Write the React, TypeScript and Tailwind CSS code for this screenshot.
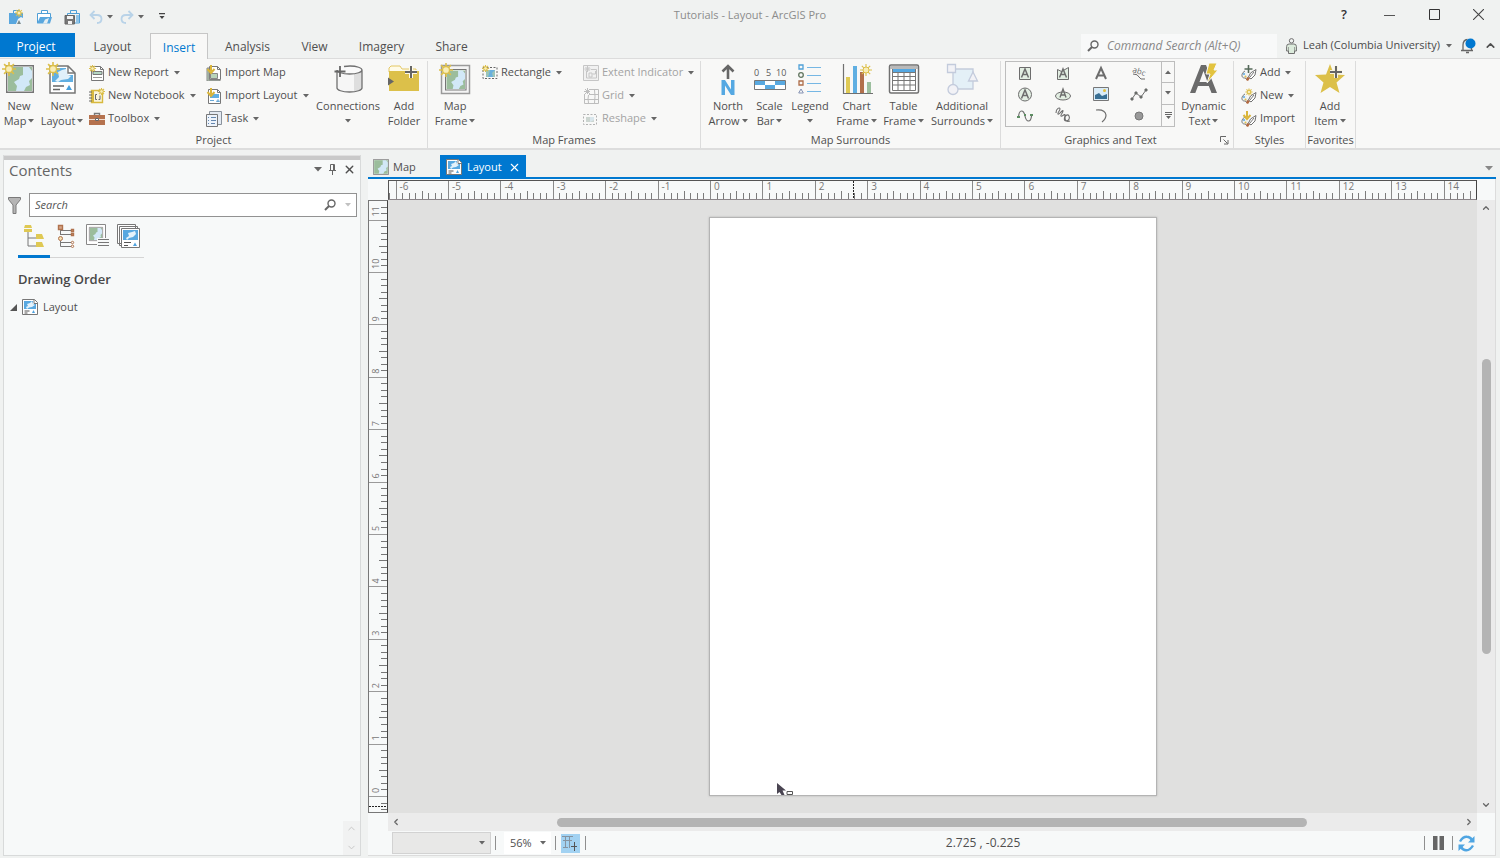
import { ReactNode, SVGProps } from "react"
import { ChevronDown, ChevronLeft, ChevronRight, ChevronUp, X } from "lucide-react"

type IconProps = SVGProps<SVGSVGElement>

const LABEL_FONT = "'Open Sans', sans-serif"

export default function App() {
  return (
    <div className="flex h-screen min-h-[600px] flex-col overflow-hidden bg-[#f0f2f1] font-['Open_Sans','Noto_Sans',sans-serif] text-[11px] text-[#4f4f4f]">
      <TitleBar />
      <TabBar />
      <Ribbon />
      <div className="flex min-h-0 flex-1 gap-[7px] pt-[5px] pr-1 pb-[2px] pl-[3px]">
        <ContentsPane />
        <LayoutView />
      </div>
    </div>
  )
}

/* ---------- title bar and tabs ---------- */

function TitleBar() {
  return (
    <header className="grid h-[33px] shrink-0 grid-cols-[1fr_auto_1fr] items-center">
      <div className="flex items-center pl-2">
        <button aria-label="New project" className="w-7"><NewProjectIcon /></button>
        <button aria-label="Open project" className="w-7"><OpenProjectIcon /></button>
        <button aria-label="Save project" className="w-[25px]"><SaveProjectIcon /></button>
        <button aria-label="Undo" className="flex w-[31px] items-center gap-1">
          <UndoIcon />
          <Caret />
        </button>
        <button aria-label="Redo" className="flex w-[39px] items-center gap-1">
          <UndoIcon className="-scale-x-100" />
          <Caret />
        </button>
        <button aria-label="Customize toolbar">
          <svg width="6" height="7" viewBox="0 0 7 8" fill="#444">
            <path d="M0 0h7v1.4H0zM0.5 3.5h6L3.5 7z" />
          </svg>
        </button>
      </div>
      <h1 className="pb-[3px] text-[#8c8c8c]">Tutorials - Layout - ArcGIS Pro</h1>
      <div className="flex items-center justify-end pb-[5px] text-[#333333]">
        <button aria-label="Help" className="w-[46px] text-center text-[13px] leading-4 font-semibold">?</button>
        <button aria-label="Minimize" className="flex w-[45px] justify-center">
          <svg width="11" height="11" viewBox="0 0 11 11"><path d="M0 6.5h11" stroke="#555" /></svg>
        </button>
        <button aria-label="Maximize" className="flex w-[45px] justify-center">
          <svg width="11" height="11" viewBox="0 0 11 11"><path d="M.5.5h10v10H.5z" fill="none" stroke="#333" /></svg>
        </button>
        <button aria-label="Close" className="flex w-[43px] justify-center">
          <svg width="11" height="11" viewBox="0 0 11 11"><path d="M0 0l11 11M11 0L0 11" stroke="#444" strokeWidth="1.1" /></svg>
        </button>
      </div>
    </header>
  )
}

function TabBar() {
  return (
    <nav className="flex h-[26px] shrink-0 border-b border-[#dcdcdc] text-xs">
      <button className="h-6 w-[75px] bg-[#0078d0] pt-[3px] pr-[3px] text-white">Project</button>
      <button className="w-[75px] pt-[3px]">Layout</button>
      <button className="-mb-px w-[58px] border border-b-0 border-[#c6c6c6] bg-[#f8f8f7] pt-[2px] text-[#0078d0]">Insert</button>
      <button className="w-[79px] pt-[3px]">Analysis</button>
      <button className="w-[55px] pt-[3px]">View</button>
      <button className="w-[79px] pt-[3px]">Imagery</button>
      <button className="w-[61px] pt-[3px]">Share</button>
      <div className="ml-auto flex items-center pr-[3px]">
        <label className="mr-[9px] flex h-6 w-[196px] items-center gap-2 bg-[#f8f9f9] pl-[6px]">
          <SearchIcon />
          <input
            aria-label="Command search"
            placeholder="Command Search (Alt+Q)"
            className="w-full bg-transparent italic outline-none placeholder:text-[#888888]"
          />
        </label>
        <button className="flex items-center gap-[6px] text-[11px] text-[#4a4a4a]">
          <UserIcon />
          <span>Leah (Columbia University)</span>
          <Caret />
        </button>
        <button aria-label="Notifications" className="ml-2"><BellIcon /></button>
        <button aria-label="Collapse ribbon" className="ml-[7px]"><ChevronUp size={13} strokeWidth={3} /></button>
      </div>
    </nav>
  )
}

/* ---------- ribbon ---------- */

function Ribbon() {
  return (
    <section className="flex h-[91px] shrink-0 border-b-2 border-[#dddddd] bg-[#f8f8f7] pt-[2px]">
      <Group label="Project" className="w-[428px]">
        <BigButton icon={<NewMapIcon />} lines={["New", "Map"]} className="w-[38px]" />
        <BigButton icon={<NewLayoutIcon />} lines={["New", "Layout"]} className="w-12" />
        <div className="flex w-[117px] flex-col pl-[3px]">
          <SmallButton icon={<NewReportIcon />} label="New Report" menu />
          <SmallButton icon={<NotebookIcon />} label="New Notebook" menu />
          <SmallButton icon={<ToolboxIcon />} label="Toolbox" menu />
        </div>
        <div className="flex w-[109px] flex-col pl-[3px]">
          <SmallButton icon={<ImportMapIcon />} label="Import Map" />
          <SmallButton icon={<ImportLayoutIcon />} label="Import Layout" menu />
          <SmallButton icon={<TaskIcon />} label="Task" menu />
        </div>
        <BigButton icon={<ConnectionsIcon />} lines={["Connections", ""]} className="w-[72px]" />
        <BigButton icon={<AddFolderIcon />} lines={["Add", "Folder"]} menu={false} className="w-10" />
      </Group>
      <Group label="Map Frames" className="w-[273px]">
        <BigButton icon={<MapFrameIcon />} lines={["Map", "Frame"]} className="w-[54px]" />
        <div className="flex w-[101px] flex-col">
          <SmallButton icon={<RectangleIcon />} label="Rectangle" menu />
        </div>
        <div className="flex flex-col text-[#a3a3a3]">
          <SmallButton icon={<ExtentIcon />} label="Extent Indicator" menu disabled />
          <SmallButton icon={<GridIcon />} label="Grid" menu disabled />
          <SmallButton icon={<ReshapeIcon />} label="Reshape" menu disabled />
        </div>
      </Group>
      <Group label="Map Surrounds" className="w-[300px]">
        <BigButton icon={<NorthArrowIcon />} lines={["North", "Arrow"]} className="w-[54px]" />
        <BigButton icon={<ScaleBarIcon />} lines={["Scale", "Bar"]} className="w-[29px]" />
        <BigButton icon={<LegendIcon />} lines={["Legend", ""]} className="w-[52px]" />
        <BigButton icon={<ChartFrameIcon />} lines={["Chart", "Frame"]} className="w-[41px]" />
        <BigButton icon={<TableFrameIcon />} lines={["Table", "Frame"]} className="w-[53px]" />
        <BigButton icon={<AdditionalIcon />} lines={["Additional", "Surrounds"]} className="w-16" />
      </Group>
      <Group label="Graphics and Text" className="w-[233px]" launcher>
        <div className="ml-1 flex h-[66px] w-[170px] border border-[#bdbdbd]">
          <div className="grid flex-1 grid-cols-4 grid-rows-3 place-items-center pr-[3px]">
            {GALLERY.map(([name, shape]) => (
              <button key={name} aria-label={name}>
                <svg width="18" height="18" viewBox="0 0 18 18" fill="none" stroke="#6d6d6d">{shape}</svg>
              </button>
            ))}
          </div>
          <div className="grid w-[13px] grid-rows-3 divide-y divide-[#bdbdbd] border-l border-[#bdbdbd]">
            <button aria-label="Previous row" className="flex items-center justify-center"><Caret className="rotate-180" /></button>
            <button aria-label="Next row" className="flex items-center justify-center"><Caret /></button>
            <button aria-label="More" className="flex items-center justify-center">
              <svg width="7" height="7" viewBox="0 0 7 7" fill="#666"><path d="M0 0h7v1H0zM0 2h7v1H0zM1 4h5L3.5 7z" /></svg>
            </button>
          </div>
        </div>
        <BigButton icon={<DynamicTextIcon />} lines={["Dynamic", "Text"]} className="w-[57px]" />
      </Group>
      <Group label="Styles" className="w-[72px]">
        <div className="flex flex-col pl-[7px]">
          <SmallButton icon={<StyleIcon kind="add" />} label="Add" menu />
          <SmallButton icon={<StyleIcon kind="new" />} label="New" menu />
          <SmallButton icon={<StyleIcon kind="import" />} label="Import" />
        </div>
      </Group>
      <Group label="Favorites" className="w-[50px]">
        <BigButton icon={<StarIcon />} lines={["Add", "Item"]} className="w-12" />
      </Group>
    </section>
  )
}

type GroupProps = { label: string; className: string; launcher?: boolean; children: ReactNode }

function Group({ label, className, launcher, children }: GroupProps) {
  return (
    <div className={`flex h-[87px] shrink-0 flex-col border-r border-[#dcdcdc] ${className}`}>
      <div className="flex h-[71px] whitespace-nowrap">{children}</div>
      <div className="flex h-4 items-center leading-4 whitespace-nowrap">
        <span className="flex-1 text-center">{label}</span>
        {launcher && (
          <button aria-label={`${label} options`} className="pr-1">
            <svg width="9" height="9" viewBox="0 0 9 9" fill="none" stroke="#666">
              <path d="M.5 6V.5H6M3.5 3.5l4 4M8 4v4H4" />
            </svg>
          </button>
        )}
      </div>
    </div>
  )
}

type BigButtonProps = { icon: ReactNode; lines: [string, string]; menu?: boolean; className: string }

function BigButton({ icon, lines, menu = true, className }: BigButtonProps) {
  return (
    <button className={`flex shrink-0 flex-col items-center leading-[15px] ${className}`}>
      <span className="h-[37px] pt-[2px]">{icon}</span>
      <span>{lines[0]}</span>
      <span className="flex h-[15px] items-center gap-[2px]">
        {lines[1]}
        {menu && <Caret />}
      </span>
    </button>
  )
}

type SmallButtonProps = { icon: ReactNode; label: string; menu?: boolean; disabled?: boolean }

function SmallButton({ icon, label, menu, disabled }: SmallButtonProps) {
  return (
    <button disabled={disabled} className="flex h-[23px] items-center gap-[3px]">
      {icon}
      <span>{label}</span>
      {menu && <Caret className="ml-[2px]" />}
    </button>
  )
}

/* ---------- contents pane ---------- */

function ContentsPane() {
  return (
    <aside className="flex w-[358px] shrink-0 flex-col border border-t-0 border-[#d8dada] bg-[#f7f9f9]">
      <div className="h-[5px] border-t border-[#e0e0e0] bg-[#c9c9c9]" />
      <div className="flex h-[19px] items-center gap-[6px] pr-1 pl-[5px]">
        <h2 className="mr-auto text-[15px] leading-5 text-[#666666]">Contents</h2>
        <button aria-label="Pane menu"><svg width="8" height="5" viewBox="0 0 8 5"><path d="M0 0h8L4 4.5z" fill="#666" /></svg></button>
        <button aria-label="Auto hide">
          <svg width="9" height="11" viewBox="0 0 9 11" fill="none" stroke="#666"><path d="M2.5 6V.5h4V6M1 6.5h7M4.500 7v4M5.500 1v5" /></svg>
        </button>
        <button aria-label="Close pane"><X size={13} strokeWidth={2.500} /></button>
      </div>
      <div className="mt-[14px] flex items-center gap-2 pr-[3px] pl-1">
        <svg width="13" height="17" viewBox="0 0 13 17" fill="#b5b5b5" stroke="#7a7a7a"><path d="M.5.5h12v2L8 8v8.500H5V8L.5 2.500z" /></svg>
        <label className="flex h-6 flex-1 items-center border border-[#929292] bg-white px-[5px]">
          <input aria-label="Search contents" placeholder="Search" className="min-w-0 flex-1 italic outline-none placeholder:text-[#555555]" />
          <SearchIcon />
          <Caret className="ml-[9px] opacity-40" />
        </label>
      </div>
      <div className="mt-[7px] ml-[14px] flex w-[126px] border-b border-[#d5d5d5]">
        <button aria-label="List by drawing order" className="-mb-px flex h-[34px] w-8 justify-center border-b-[3px] border-[#0078d0]"><DrawingOrderIcon /></button>
        <button aria-label="List by element type" className="flex w-8 justify-center"><ElementTypeIcon /></button>
        <button aria-label="List map frames" className="flex w-8 justify-center"><MapFramesIcon /></button>
        <button aria-label="List pages" className="flex w-7 justify-center"><PagesIcon /></button>
      </div>
      <h3 className="mt-[11px] ml-[14px] text-[13px] leading-5 font-semibold text-[#484848]">Drawing Order</h3>
      <ul className="mt-2 flex-1 pl-[6px]">
        <li className="flex h-5 items-center gap-[5px]">
          <svg width="7" height="7" viewBox="0 0 7 7"><path d="M7 0v7H0z" fill="#555" /></svg>
          <PageIcon />
          <span>Layout</span>
        </li>
      </ul>
      <div className="flex h-[34px] w-[17px] flex-col items-center justify-between self-end bg-[#f1f2f2] py-[2px] text-[#c4c4c4]">
        <ChevronUp size={11} />
        <ChevronDown size={11} />
      </div>
    </aside>
  )
}

/* ---------- layout view ---------- */

function LayoutView() {
  return (
    <main className="flex min-w-0 flex-1 flex-col">
      <div className="flex h-6 shrink-0 items-end border-b-2 border-[#0078d0]">
        <button className="flex h-[22px] w-[72px] items-center gap-1 pt-[2px] pl-[5px]">
          <SmallMapIcon />
          <span>Map</span>
        </button>
        <button className="flex h-[22px] w-[86px] items-center gap-[5px] bg-[#0078d0] pt-[2px] pl-[6px] text-white">
          <PageIcon />
          <span>Layout</span>
          <X size={13} strokeWidth={2} className="ml-px" />
        </button>
        <button aria-label="View list" className="ml-auto self-center pt-1 pr-[3px]">
          <svg width="8" height="5" viewBox="0 0 8 5"><path d="M0 0h8L4 4.500z" fill="#888" /></svg>
        </button>
      </div>
      <div className="grid min-h-0 flex-1 grid-cols-[20px_minmax(0,1fr)_18px] grid-rows-[20px_minmax(0,1fr)_18px] border-r border-[#dcdcdc] bg-[#f7f9f9] pt-px">
        <div />
        <HorizontalRuler />
        <div />
        <VerticalRuler />
        <div className="flex min-h-0 items-center justify-center overflow-hidden bg-[#e0e0df]">
          <div className="relative h-[579px] w-[448px] shrink-0 border border-[#b4b4b4] bg-white shadow-[0_0_2px_#b4b4b4]">
            <Cursor className="absolute top-[565px] left-[66px]" />
          </div>
        </div>
        <div className="flex flex-col items-center bg-[#ebebeb] text-[#666666]">
          <button aria-label="Scroll up" className="flex h-4 items-center"><ChevronUp size={10} strokeWidth={3} /></button>
          <div className="flex-[143]" />
          <div className="w-[9px] flex-[296] rounded-full bg-[#b4b4b4]" />
          <div className="flex-[143]" />
          <button aria-label="Scroll down" className="flex h-4 items-center"><ChevronDown size={10} strokeWidth={3} /></button>
        </div>
        <div />
        <div className="flex items-center bg-[#ebebeb] text-[#666666]">
          <button aria-label="Scroll left" className="flex w-4 justify-center"><ChevronLeft size={10} strokeWidth={3} /></button>
          <div className="flex-[153]" />
          <div className="h-[9px] flex-[751] rounded-full bg-[#b4b4b4]" />
          <div className="flex-[154]" />
          <button aria-label="Scroll right" className="flex w-4 justify-center"><ChevronRight size={10} strokeWidth={3} /></button>
        </div>
        <div />
      </div>
      <StatusBar />
    </main>
  )
}

function StatusBar() {
  return (
    <footer className="grid h-[25px] shrink-0 grid-cols-[7fr_auto_6fr] items-center border-r border-b border-[#dcdcdc] bg-[#f7f9f9] pl-6">
      <div className="flex items-center">
        <div className="relative">
          <select aria-label="Map frame" className="block h-[22px] w-[99px] appearance-none border border-[#d2d2d2] bg-[#e8e8e7]" />
          <Caret className="pointer-events-none absolute top-[9px] right-[6px]" />
        </div>
        <Divider className="ml-1" />
        <div className="relative ml-2">
          <select aria-label="Scale" className="block h-[22px] w-[47px] appearance-none bg-white pl-[6px]">
            <option>56%</option>
          </select>
          <Caret className="pointer-events-none absolute top-[9px] right-[5px]" />
        </div>
        <Divider className="ml-1" />
        <button aria-label="Snapping" className="ml-[5px] bg-[#a2d2f2]">
          <svg width="19" height="19" viewBox="0 0 19 19" fill="none" stroke="#8593a0">
            <path d="M1 2.500h11M2 6.500h9M4.500 2v12M8.500 2v12M2 13.500h5" />
            <path d="M13.500 8v9M10 12.500h6" stroke="#555" />
          </svg>
        </button>
        <Divider className="ml-[5px]" />
      </div>
      <span className="text-xs">2.725 , -0.225</span>
      <div className="flex items-center justify-end pr-5">
        <Divider />
        <button aria-label="Pause drawing" className="mx-2">
          <svg width="11" height="14" viewBox="0 0 11 14" fill="#666"><path d="M0 0h4.500v14H0zM6.500 0H11v14H6.500z" /></svg>
        </button>
        <Divider />
        <button aria-label="Refresh" className="ml-[5px]"><RefreshIcon /></button>
      </div>
    </footer>
  )
}

function Divider({ className = "" }: { className?: string }) {
  return <div className={`h-[14px] w-px bg-[#8f8f8f] ${className}`} />
}

/* ---------- rulers ---------- */

const INCH = 52.4
const EIGHTHS = Array.from({ length: 170 }, (_, i) => i - 50)

function inches(from: number, to: number) {
  return Array.from({ length: to - from + 1 }, (_, i) => from + i)
}

function HorizontalRuler() {
  // origin of the page, measured from the ruler's left end
  const origin = 322
  return (
    <svg className="h-5 w-full overflow-hidden border border-t-[#555555] border-r-[#444444] border-b-[#8b8589] border-l-[#555555]" fill="none">
      {EIGHTHS.map((n) => {
        const x = Math.round(origin + (n * INCH) / 8) - 0.5
        const top = n % 8 === 0 ? 0 : n % 4 === 0 ? 10 : 12
        return <path key={n} d={`M${x} ${top}V18`} stroke={n % 8 === 0 ? "#8a8a8a" : "#7c7c7c"} />
      })}
      {inches(-6, 14).map((n) => (
        <text key={n} x={origin + 3 + n * INCH} y="9" fontSize="10" fill="#777" fontFamily={LABEL_FONT}>
          {n}
        </text>
      ))}
      <path d="M464.5 0V18" stroke="#222" strokeDasharray="2 1" />
    </svg>
  )
}

function VerticalRuler() {
  const origin = 596
  return (
    <svg className="h-full w-5 overflow-hidden border border-[#777777] border-r-[#444444]" fill="none">
      {EIGHTHS.map((n) => {
        const y = Math.round(origin - (n * INCH) / 8) - 0.5
        const left = n % 8 === 0 ? 0 : n % 4 === 0 ? 10 : 12
        return <path key={n} d={`M${left} ${y}H18`} stroke={n % 8 === 0 ? "#9a9a9a" : "#777"} />
      })}
      {inches(0, 11).map((n) => {
        const y = origin - 4 - n * INCH
        return (
          <text key={n} x="10" y={y} transform={`rotate(-90 10 ${y})`} fontSize="9" fill="#777" fontFamily={LABEL_FONT}>
            {n}
          </text>
        )
      })}
      <path d="M0 605.5H18" stroke="#222" strokeDasharray="2 1" />
    </svg>
  )
}

/* ---------- shared pieces of icons ---------- */

function Caret({ className = "" }: { className?: string }) {
  return (
    <svg width="6" height="4" viewBox="0 0 6 4" className={`shrink-0 ${className}`}>
      <path d="M0 0h6L3 3.500z" fill="#666" />
    </svg>
  )
}

function Sun({ x, y, r = 3.5 }: { x: number; y: number; r?: number }) {
  const rays = `M0 ${-2 * r}V${2 * r}M${-2 * r} 0H${2 * r}M${-1.4 * r} ${-1.4 * r}L${1.4 * r} ${1.4 * r}M${1.4 * r} ${-1.4 * r}L${-1.4 * r} ${1.4 * r}`
  return (
    <g transform={`translate(${x} ${y})`} stroke="#dcbf4b">
      <path d={rays} strokeWidth={r > 3 ? 1.6 : 1.1} />
      <circle r={r} fill="#f8edb8" strokeWidth={r > 3 ? 1.3 : 1} />
    </g>
  )
}

function Icon16({ children, ...props }: IconProps) {
  return <svg width="16" height="16" viewBox="0 0 16 16" fill="none" className="shrink-0" {...props}>{children}</svg>
}

function Icon32({ children, ...props }: IconProps) {
  return <svg width="32" height="32" viewBox="0 0 32 32" fill="none" overflow="visible" {...props}>{children}</svg>
}

function SearchIcon() {
  return (
    <svg width="12" height="12" viewBox="0 0 12 12" fill="none" stroke="#666" className="shrink-0">
      <circle cx="7.500" cy="4.500" r="3.500" strokeWidth="1.400" />
      <path d="M5 7L1 11" strokeWidth="2" />
    </svg>
  )
}

function UserIcon() {
  return (
    <svg width="11" height="16" viewBox="0 0 11 16" fill="none" stroke="#707070">
      <circle cx="5.500" cy="2.800" r="2.200" />
      <path d="M.6 13V8.500q0-2.500 2.500-2.500h4.800q2.500 0 2.500 2.500V13H8.500v2.500h-6V13z" fill="#dcebdc" />
      <path d="M2.500 9v4M8.500 9v4" strokeWidth=".6" />
    </svg>
  )
}

function BellIcon() {
  return (
    <svg width="17" height="16" viewBox="0 0 17 16" fill="none">
      <path d="M1 12.500h12M3 12V7q0-5 4.500-5.500M11.500 12V9M6 14.500h3" stroke="#666" strokeWidth="1.300" />
      <circle cx="10.500" cy="5.500" r="5" fill="#0078d0" />
    </svg>
  )
}

function Briefcase() {
  return (
    <>
      <path d="M5.500 4V1.500h6V4" stroke="#4f9fd6" />
      <path d="M1 4h14v11H1z" fill="#59a7de" />
      <path d="M8 15l2-5 3-2 2 1v6z" fill="#eef4f8" />
      <path d="M9 15l2-4 2 4z" fill="#7c8a8a" />
    </>
  )
}

function NewProjectIcon() {
  return <Icon16><Briefcase /><Sun x={11} y={4} r={2} /></Icon16>
}

function OpenProjectIcon() {
  return (
    <Icon16>
      <path d="M5.500 4V1.500h6V4M1.500 14V4.500h13V8" stroke="#4f9fd6" fill="#fff" />
      <path d="M1 14.500L4 8h12l-2 6.500z" fill="#59a7de" />
      <path d="M7 14.500l2-4 4-1.500-2 5.500z" fill="#e5eef2" />
    </Icon16>
  )
}

function SaveProjectIcon() {
  return (
    <Icon16>
      <path d="M6.500 4V1.500h6V4M3.500 6V4.500h12V14H11" stroke="#4f9fd6" />
      <path d="M12 6h3v8h-3z" fill="#8fc4e8" />
      <path d="M1 6.500h9.500v8.500H1z" fill="#777" stroke="#666" />
      <path d="M3 7h6v3H3zM4 12h4v3H4z" fill="#f2f2f2" />
    </Icon16>
  )
}

function UndoIcon(props: IconProps) {
  return (
    <svg width="14" height="14" viewBox="0 0 14 14" fill="none" stroke="#b9d3e8" strokeWidth="1.800" {...props}>
      <path d="M5.500 1L1.500 5l4 4M2 5h6q4.500 0 4.500 4T8 13" />
    </svg>
  )
}

/* ---------- ribbon icons ---------- */

function MapArt() {
  // 28 x 28 tile: green land with a river running down it
  return (
    <>
      <path d="M0 0h28v28H0z" fill="#fff" />
      <path d="M2 2h24v24H2z" fill="#9bbd9c" />
      <path d="M17 2h6l3 4v7l-3 3 1 4-4 2-2 4H10l1-5-3-4 5-3 1-3 3-1z" fill="#d2e8f7" />
      <path d="M.7.7h26.600v26.600H.7z" stroke="#757575" strokeWidth="1.400" />
    </>
  )
}

function NewMapIcon() {
  return (
    <Icon32>
      <g transform="translate(3 2)"><MapArt /></g>
      <Sun x={6} y={6} />
    </Icon32>
  )
}

function NewLayoutIcon() {
  return (
    <Icon32>
      <path d="M4 3h18l7 7v20H4z" fill="#fff" stroke="#757575" strokeWidth="1.500" />
      <path d="M6 5h14v7h7v7H6z" fill="#61afe2" />
      <path d="M12 9l4-2 4-1 2 6 3 1-3 3-7 1-3 2-3-1 4-4z" fill="#e0f0fa" />
      <path d="M22 3v7h7" stroke="#757575" strokeWidth="1.400" />
      <path d="M7 23h11M7 26.500h7" stroke="#666" strokeWidth="1.500" />
      <path d="M20 27l3-5 3 5z" fill="#459fdd" />
      <Sun x={7} y={6} />
    </Icon32>
  )
}

function NewReportIcon() {
  return (
    <Icon16>
      <path d="M2.500 1.500h9l3 3v11h-12z" fill="#fff" stroke="#777" />
      <path d="M11.500 1.500v3h3" stroke="#777" />
      <path d="M4 6.500h9v3H4z" fill="#b4d6c3" stroke="#777" />
      <path d="M4 12.500h9" stroke="#999" />
      <Sun x={3.500} y={3.500} r={1.800} />
    </Icon16>
  )
}

function NotebookIcon() {
  return (
    <Icon16>
      <path d="M2.500 2.500h11v12h-11z" fill="#faf4da" stroke="#d8b93e" strokeWidth="1.400" />
      <path d="M2 2h3v13H2z" fill="#d8b93e" />
      <path d="M0 4h3M0 7h3M0 10h3M0 13h3" stroke="#666" />
      <path d="M8 6.500H6.500v5H8M9.500 11.500H11v-4" stroke="#666" />
      <Sun x={12.500} y={3.500} r={1.800} />
    </Icon16>
  )
}

function ToolboxIcon() {
  return (
    <Icon16>
      <path d="M5.500 4V2.500h5V4" stroke="#777" strokeWidth="1.400" />
      <path d="M0 4h16v10H0z" fill="#b5724e" />
      <path d="M0 8.500h16" stroke="#f2ddd0" />
      <path d="M6.500 7.500h3v2h-3z" fill="#fff" stroke="#666" />
    </Icon16>
  )
}

function DownArrow() {
  return <path d="M5 0v6M1.500 4L5 8l3.500-4" stroke="#dab53a" strokeWidth="2" />
}

function ImportMapIcon() {
  return (
    <Icon16>
      <path d="M3.500 1.500h8l3 3v10h-11z" fill="#fff" stroke="#777" />
      <path d="M1 3h2v12h11v1H1zM4.500 8.500h7v5h-7z" fill="#b9d4ba" stroke="#888" />
      <path d="M11.500 1.500v3h3" stroke="#777" />
      <DownArrow />
    </Icon16>
  )
}

function ImportLayoutIcon() {
  return (
    <Icon16>
      <path d="M2.500 1.500h9l3 3v11h-12z" fill="#fff" stroke="#777" />
      <path d="M4 6h9v4H4z" fill="#61afe2" />
      <path d="M4 12.500h4M12 11.500l1.500 2h-3z" stroke="#68a8d6" />
      <path d="M11.500 1.500v3h3" stroke="#777" />
      <DownArrow />
    </Icon16>
  )
}

function TaskIcon() {
  return (
    <Icon16>
      <path d="M3.500.5h12v13h-12z" fill="#e4eaf2" stroke="#8a929c" />
      <path d="M.5 3.500h11v12H.5z" fill="#edf3fb" stroke="#777" />
      <path d="M2 6.500h1M2 9.500h1M2 12.500h1M5 6.500h5M5 9.500h5M5 12.500h4" stroke="#6487ae" />
    </Icon16>
  )
}

function ConnectionsIcon() {
  return (
    <Icon32>
      <path d="M5 7v18c0 2 5 4 13 4s12-2 12-4V7z" fill="#f6f6f6" />
      <path d="M22 11v17.500c5-.5 8-2 8-3.500V7q-2 3-8 4z" fill="#dedede" />
      <ellipse cx="17.500" cy="7" rx="12.500" ry="4" fill="#fafafa" />
      <path d="M12 3.500c2-.3 4-.5 6-.5 7 0 12 2 12 4s-5 4-12.500 4S5 9 5 7v18c0 2 5 4 12.500 4S30 27 30 25V7" stroke="#707070" strokeWidth="1.300" />
      <path d="M8 3v11M2.500 8.500h11" stroke="#666" strokeWidth="1.800" />
    </Icon32>
  )
}

function AddFolderIcon() {
  return (
    <Icon32>
      <path d="M1 9V5l2-2h9l2 3h14v4" fill="#fffbe8" stroke="#e4c865" />
      <path d="M1 8h30v20H1z" fill="#dcc04a" />
      <path d="M23 3v12M17 9h12" stroke="#fffbe8" strokeWidth="4" />
      <path d="M23 3v12M17 9h12" stroke="#666" strokeWidth="2" />
      <path d="M0 14.500l6 4-6 4z" fill="#666" />
    </Icon32>
  )
}

function MapFrameIcon() {
  return (
    <Icon32>
      <path d="M2.500 2.500h28v28h-28z" fill="#f4f4f4" stroke="#9a9a9a" strokeWidth="1.500" />
      <g transform="translate(6 6) scale(.77)"><MapArt /></g>
      <Sun x={7} y={7} />
    </Icon32>
  )
}

function RectangleIcon() {
  return (
    <Icon16>
      <path d="M1 2.500h14v11H1z" stroke="#666" strokeDasharray="2 1.500" />
      <path d="M4 5h9v7H4z" fill="#9bc4b8" />
      <path d="M8 5h5l-3 3 1 4H6l1-3z" fill="#69b0dd" />
      <Sun x={3.500} y={3.500} r={1.800} />
    </Icon16>
  )
}

function ExtentIcon() {
  return (
    <Icon16 stroke="#c6c6c6">
      <path d="M.5.500h15v15H.5z" fill="#f1f1f1" />
      <path d="M3.500 6v7h10V4.500H8M6 8h3v4H6zM9.500 9h3v-3M4.500 1v6M1.500 4h6M2.500 2l4 4M6.500 2l-4 4" />
    </Icon16>
  )
}

function GridIcon() {
  return (
    <Icon16 stroke="#bdbdbd">
      <path d="M1.500 6v9.500h14v-14H7M5.500 7q-1 4 0 8M11.500 2q1 6 0 13M2 11.500h13M6 6.500h9M4.500 0v6M1 3.500h6M2 1l5 5M7 1L2 6" />
    </Icon16>
  )
}

function ReshapeIcon() {
  return (
    <Icon16>
      <path d="M.5 3.500h13v10H.5z" stroke="#b2b2b2" strokeDasharray="2 1.500" />
      <path d="M3 6h8v5H3z" fill="#ccd5d0" />
      <path d="M7 6h4v3l-4 2z" fill="#d9e6ec" />
    </Icon16>
  )
}

function NorthArrowIcon() {
  return (
    <Icon32>
      <path d="M16 16V4M10.500 8.500L16 3l5.500 5.500" stroke="#666" strokeWidth="2.600" />
      <path d="M9.500 32V17h3.500l6 9.500V17h3.500v15H19l-6-9.500V32z" fill="#55a8e2" />
    </Icon32>
  )
}

function ScaleBarIcon() {
  return (
    <Icon32>
      <g fontSize="9" fill="#5a5a5a" fontFamily={LABEL_FONT}>
        <text x="0" y="13">0</text>
        <text x="12" y="13">5</text>
        <text x="22" y="13">10</text>
      </g>
      <path d="M.5 17.500h31v9H.5z" fill="#fff" stroke="#777" />
      <path d="M1 18h10v4H1zM21 18h10v4H21zM11 22h10v4H11z" fill="#59a9e0" />
    </Icon32>
  )
}

function LegendIcon() {
  return (
    <Icon32>
      <path d="M5 2h4v4H5z" stroke="#4fa0d8" strokeWidth="1.300" />
      <circle cx="7" cy="12" r="2.300" stroke="#61755f" strokeWidth="1.300" />
      <path d="M5 18h4v4H5z" stroke="#ad6c48" strokeWidth="1.300" />
      <path d="M7 26l2.300 4H4.700z" stroke="#8491b2" />
      <path d="M13 4.500h14M13 12.500h14M13 20.500h14M13 28.500h14" stroke="#76b7e4" />
    </Icon32>
  )
}

function ChartFrameIcon() {
  return (
    <Icon32>
      <path d="M5 14h4v16H5z" fill="#dfca55" />
      <path d="M12 3h4v27h-4z" fill="#60afe2" />
      <path d="M19 9h4v21h-4z" fill="#b2704c" />
      <path d="M26 19h4v11h-4z" fill="#9cbf9e" />
      <path d="M2.500 1v29.500H32" stroke="#707070" strokeWidth="1.200" />
      <Sun x={25} y={7} r={3} />
    </Icon32>
  )
}

function TableFrameIcon() {
  return (
    <Icon32>
      <rect x="1.500" y="2" width="29" height="28" rx="1.500" fill="#fff" stroke="#707070" strokeWidth="1.500" />
      <path d="M2 3h28v3H2z" fill="#b9b9b9" />
      <path d="M4 6h24v3H4z" fill="#55a8e2" />
      <path d="M4 9.500h24M4 13.500h24M4 17.500h24M4 22h24M4.500 6v21.500h23V6M10 9v18M16 9v18M22 9v18" stroke="#777" />
    </Icon32>
  )
}

function AdditionalIcon() {
  return (
    <Icon32 stroke="#c3cbdc" strokeWidth="1.300">
      <path d="M7 6h20v20H7z" fill="#e4f0f7" />
      <path d="M1.500 1.500h8v8h-8z" fill="#f2f2f6" />
      <circle cx="7" cy="26.500" r="5" fill="#f2f2f6" />
      <path d="M27 9l4.500 9h-9z" fill="#f2f2f6" />
    </Icon32>
  )
}

function DynamicTextIcon() {
  return (
    <Icon32>
      <path fillRule="evenodd" d="M2 30L13 2h5l11 28h-5.500l-2.700-7H10l-2.700 7zM11.500 19h8L15.500 8z" fill="#6b6b6b" />
      <path d="M21 0h8l-3 7h4L19 20l3-9h-4z" fill="#e3c33f" stroke="#f8f8f7" />
    </Icon32>
  )
}

function StyleIcon({ kind }: { kind: "add" | "new" | "import" }) {
  return (
    <Icon16>
      <path d="M4 6C0 8 0 13 3.500 13q2 0 2 1.500L9 12" fill="#eef2f4" stroke="#777" />
      <circle cx="3" cy="9" r="1" fill="#58a8e0" />
      <circle cx="4.500" cy="11.500" r="1" fill="#e0c24a" />
      <path d="M15 4.500L14 10l-4 4-2.500-2 2-4z" fill="#fff" stroke="#707070" />
      <path d="M13 7l-4 5" stroke="#777" />
      <path d="M5 15l1-3 3 1-2 3z" fill="#b2683f" />
      {kind === "add" && <path d="M7.500 0v8M3.500 4h8" stroke="#55695a" strokeWidth="1.600" />}
      {kind === "new" && <Sun x={8} y={4} r={1.800} />}
      {kind === "import" && <g transform="translate(1 0)"><DownArrow /></g>}
    </Icon16>
  )
}

function StarIcon() {
  return (
    <Icon32>
      <path d="M16 1l4 10.500 11 .5-8.500 7.500L25.500 30 16 24 6.500 30l3-10.500L1 12l11-.5z" fill="#dcc04a" />
      <path d="M22 3v12M16 9h12" stroke="#f8f4dc" strokeWidth="4" />
      <path d="M22 3v12M16 9h12" stroke="#666" strokeWidth="2" />
    </Icon32>
  )
}

const LETTER_A = <path d="M5.500 13.500L9 5l3.500 8.500M6.700 10.500h4.600" strokeWidth="1.500" />

const GALLERY: [string, ReactNode][] = [
  ["Rectangle text", <><path d="M3.500 3.500h11v12h-11z" fill="#e2eee2" />{LETTER_A}</>],
  ["Polygon text", <><path d="M3.500 5.500l4 2 7-4v12h-11z" fill="#e2eee2" />{LETTER_A}</>],
  ["Straight text", <path d="M4 15L9 4l5 11M5.500 11.500h7" strokeWidth="2" />],
  ["Curved text", <><text x="2" y="8" fontSize="8" fill="#666" stroke="none" transform="rotate(18 2 8)" fontFamily={LABEL_FONT}>abc</text><path d="M3 10q5 0 6 3t6 2" /></>],
  ["Circle text", <><circle cx="9" cy="9.500" r="6.500" fill="#e2eee2" />{LETTER_A}</>],
  ["Ellipse text", <><ellipse cx="9" cy="11" rx="7.500" ry="4" fill="#e2eee2" /><path d="M6 12.500L9 4l3 8.500M7 10h4" strokeWidth="1.400" /></>],
  ["Picture", <><path d="M1.500 2.500h15v13h-15z" fill="#d9ecf8" stroke="#777" /><path d="M3 10l4-2 3 3 5-2v5H3z" fill="#386f94" stroke="none" /><circle cx="12.500" cy="5.500" r="1.500" fill="#e3bd3c" stroke="none" /></>],
  ["Line", <><path d="M2 14l4-6 5 4 5-7" /><path d="M1 13h2v2H1zM5 7h2v2H5zM10 11h2v2h-2zM15 4h2v2h-2z" fill="#5d6d5d" /></>],
  ["Bezier curve", <><path d="M2.500 11Q3 5 5.500 5T9 10t3.500 5 3-5" strokeWidth="1.200" /><path d="M1 10h3v2H1zM8 8h2v2H8zM14 8h3v2h-3z" fill="#5d8d62" stroke="none" /></>],
  ["Freehand", <path d="M2 7C2 2 6 1 6 3S3 7 4 8s5-5 5-3-3 4-2 5 4-3 4-1-2 6 1 6 4-3 3-5-4-1-4 2 2 4 5 3" strokeWidth="1.100" />],
  ["Arc", <path d="M4 4q9-1 10 5 0 4-4 7" strokeWidth="1.200" />],
  ["Point", <circle cx="9" cy="10" r="4" fill="#999" stroke="#777" />],
]

/* ---------- pane and view icons ---------- */

function PageIcon() {
  return (
    <Icon16>
      <path d="M.5.500h12l3 3v12H.5z" fill="#fff" stroke="#777" />
      <path d="M2 2h9v3h3v5H2z" fill="#58a8e0" />
      <path d="M5 5l3-1 2-2 1 3 2 1-3 2-3 .5L5 10 4 8l2-1z" fill="#e4f2fb" />
      <path d="M12 .5v4h3.500" stroke="#777" />
      <path d="M2.500 12h5M2.500 14h3" stroke="#555" />
      <path d="M10 14l1.500-3 1.500 3z" fill="#4fa3df" />
    </Icon16>
  )
}

function SmallMapIcon() {
  return (
    <Icon16>
      <g transform="scale(.57)"><MapArt /></g>
    </Icon16>
  )
}

function DrawingOrderIcon() {
  return (
    <svg width="24" height="24" viewBox="0 0 24 24" fill="none">
      <path d="M6 8v14h8M6 14h8" stroke="#777" />
      <path d="M3 1h6l1 3H2zM2 5h8v3H2zM14 10h6l2 5h-8zM14 18h6l2 5h-8z" fill="#dfc954" />
    </svg>
  )
}

function ElementTypeIcon() {
  return (
    <svg width="24" height="24" viewBox="0 0 24 24" fill="none" stroke="#b0724d">
      <path d="M6.500 5v6M7 6.500h10M7 10.500h10M6.500 17v5.500H17M7 18.500h10" stroke="#777" />
      <path d="M4.500 1.500h4v4h-4zM17.500 5.500h2v2h-2zM17.500 9.500h2v2h-2z" fill="#d6a68a" strokeWidth="1.400" />
      <circle cx="6.500" cy="14.500" r="2" fill="#f4e2b2" />
      <circle cx="18.500" cy="18.500" r="1.200" />
      <circle cx="18.500" cy="22.300" r="1.200" />
    </svg>
  )
}

function MapFramesIcon() {
  return (
    <svg width="24" height="24" viewBox="0 0 24 24" fill="none">
      <path d="M.5.500h19v20H.5z" fill="#fff" stroke="#888" />
      <g transform="translate(3 3) scale(.5)"><MapArt /></g>
      <path d="M11 14h13v9H11z" fill="#f7f9f9" />
      <path d="M12 15.500h11M12 18.500h11M12 21.500h11" stroke="#777" />
    </svg>
  )
}

function PagesIcon() {
  return (
    <svg width="24" height="24" viewBox="0 0 24 24" fill="#fff" stroke="#777">
      <path d="M1.500.500h18v19h-18zM3.500 2.500h18v19h-18z" />
      <path d="M5.500 4.500h18v19h-18z" />
      <path d="M7 6h15v10H7z" fill="#58a8e0" stroke="none" />
      <path d="M12 9l4-1 3-1 1 3-3 3-4 1-2 2-1-2 3-2z" fill="#e4f2fb" stroke="none" />
      <path d="M8 18.500h7M8 21.500h4" stroke="#555" />
      <path d="M17 22l2-3.500 2 3.500z" fill="#4fa3df" stroke="none" />
    </svg>
  )
}

function RefreshIcon() {
  return (
    <svg width="17" height="17" viewBox="0 0 17 17" fill="none" stroke="#4fa5e2" strokeWidth="2.400">
      <path d="M2 6.500Q5 1.500 9 1.800q3 0 5 3.200M15 10.500q-3 5-7 4.700-3 0-5-3.200" />
      <path d="M16.500 1v6.500H10zM.5 16V9.500H7z" fill="#4fa5e2" stroke="none" />
    </svg>
  )
}

function Cursor(props: IconProps) {
  return (
    <svg width="18" height="13" viewBox="0 0 18 13" fill="none" {...props}>
      <path d="M1 0l9 7.500H6.500L8.500 12H5.500L3.500 9 1 11z" fill="#4a4552" />
      <path d="M11 8.500h5.500v3H11z" fill="#fff" stroke="#555" />
    </svg>
  )
}
